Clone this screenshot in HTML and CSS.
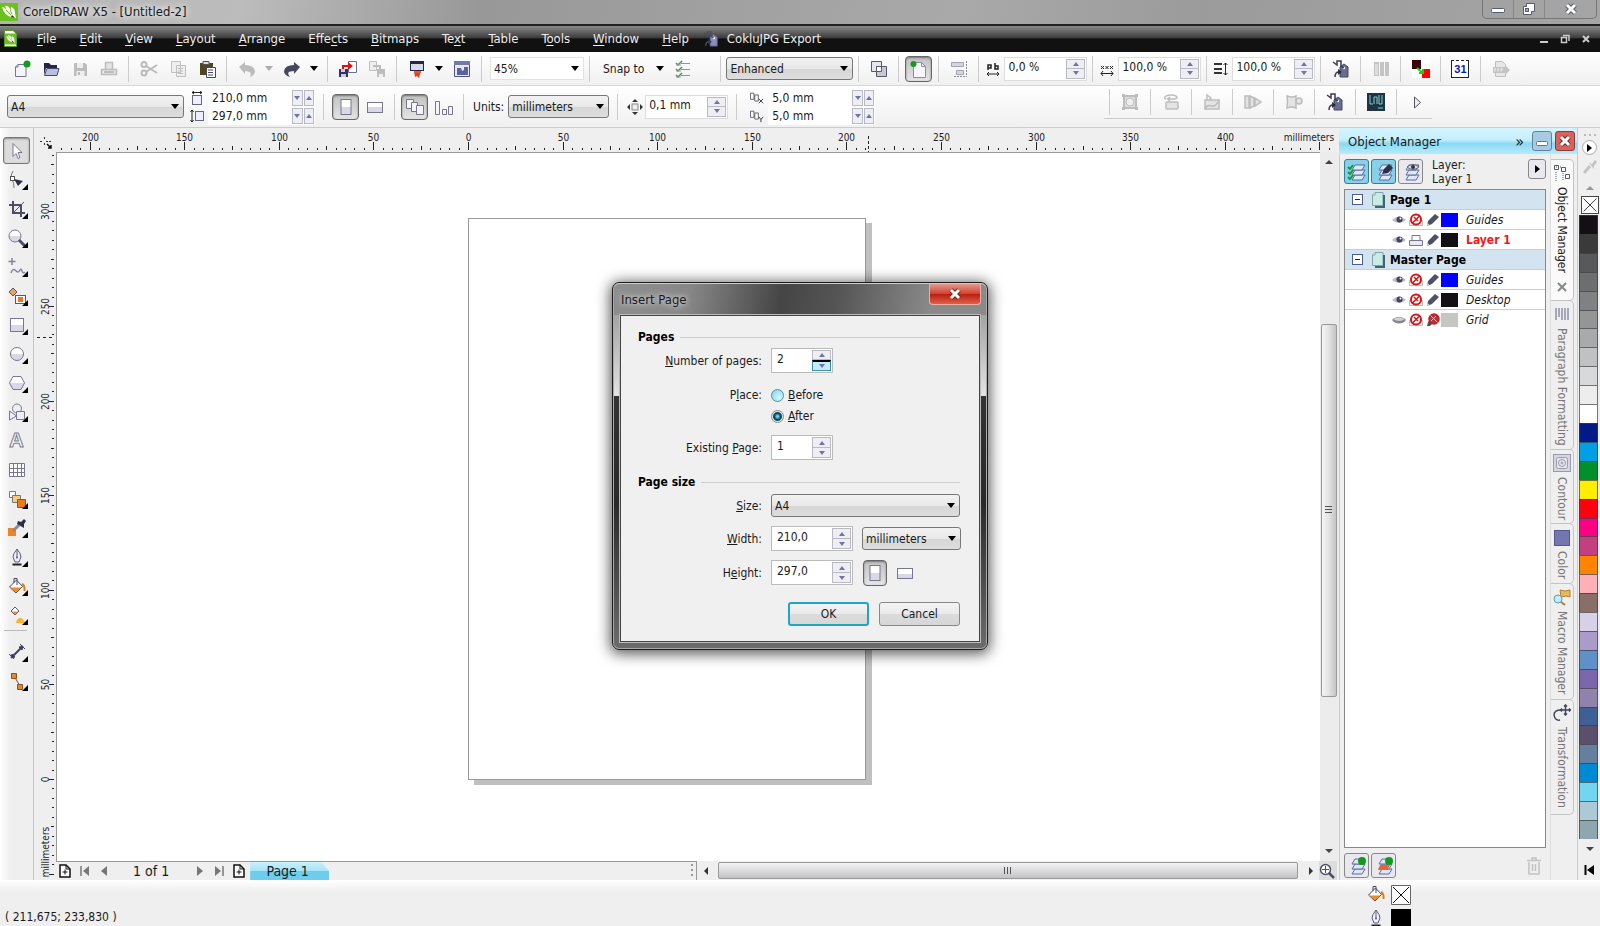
FILE: index.html
```html
<!DOCTYPE html>
<html lang="en">
<head>
  <meta charset="UTF-8">
  <meta name="viewport" content="width=device-width, initial-scale=1.0">
  <title>CorelDRAW X5 - [Untitled-2]</title>
  <link rel="stylesheet" href="styles.css">
</head>
<body>
  <!-- shared icons -->
  <svg class="defs" width="0" height="0">
    <linearGradient id="sheet" x1="0" y1="0" x2="0" y2="1">
      <stop offset="0.5" stop-color="#fff"/><stop offset="0.5" stop-color="#d8d8e6"/>
    </linearGradient>
    <symbol id="portrait" viewBox="0 0 18 18"><rect x="4" y="1.5" width="10" height="15" fill="url(#sheet)" stroke="#77778c"/></symbol>
    <symbol id="landscape" viewBox="0 0 18 18"><rect x="1.5" y="4.5" width="15" height="10" fill="url(#sheet)" stroke="#77778c"/></symbol>
    <symbol id="bucket" viewBox="0 0 18 18">
      <path d="M1.500 10 8.500 3l6 6.500-6.500 6.500z" fill="#fff" stroke="#44465c"/>
      <path d="M2.500 10.500h11L8 15.500z" fill="#f58a1f"/>
      <path d="M14 7q3 1 2.500 7" fill="none" stroke="#e07b1a" stroke-width="2"/>
      <path d="M6 6V1.500h3V8" fill="none" stroke="#44465c"/>
    </symbol>
    <symbol id="nib" viewBox="0 0 18 18">
      <path d="M9 1Q5 6 5 9l2 5h4l2-5Q13 6 9 1z" fill="#eef" stroke="#5a5c72"/>
      <path d="M9 2v7" stroke="#5a5c72"/><circle cx="9" cy="9.500" r="1" fill="#5a5c72"/>
      <path d="M4.500 16.500h9" stroke="#222" stroke-width="2"/>
    </symbol>
    <symbol id="tag" viewBox="0 0 18 18">
      <path d="M8 7l4-3 4 3v10H8z" fill="#6a6d90" stroke="#45476a"/><circle cx="12" cy="8" r="1.200" fill="#fff"/>
      <path d="M1 2l4 3V1h4v5l3 2M3 17q0-5 4-5" fill="none" stroke="#3a3b4d" stroke-width="1.500"/>
      <path d="M6 9l4 3-4 3z" fill="#2c2d3d"/>
    </symbol>
    <symbol id="eye" viewBox="0 0 14 14"><path d="M0 7q7-7 14 0-7 6-14 0z" fill="#b9b9c4"/><circle cx="7.500" cy="6.500" r="3" fill="#44455c"/><circle cx="8.500" cy="5.500" r="1" fill="#fff"/></symbol>
    <symbol id="eye-off" viewBox="0 0 14 14"><path d="M0.500 6q6.500-4 13 0v2q-6.500 5-13 0z" fill="#85858f"/><path d="M1 6q6-3 12 0-6 4-12 0z" fill="#d0d0d6"/></symbol>
    <symbol id="print" viewBox="0 0 14 14"><path d="M3 2.500h8v5H3z" fill="#fff" stroke="#77778c"/><path d="M0.500 7.500h13v5H.500z" fill="#e8e8ee" stroke="#77778c"/></symbol>
    <symbol id="no-print" viewBox="0 0 14 14"><path d="M0.500 7.500h13v5H.500z" fill="#eee" stroke="#bbb"/><circle cx="7" cy="6.500" r="5" fill="#fff" stroke="#d01818" stroke-width="2"/><path d="M10.500 3l-7 7M5 4l4 4" stroke="#d01818" stroke-width="1.500"/></symbol>
    <symbol id="pencil" viewBox="0 0 14 14"><path d="M1 13l1-5 7-7 4 3-7 7z" fill="#4d506b"/><path d="M1 13l.500-3 2 2z" fill="#ddd"/></symbol>
    <symbol id="no-pencil" viewBox="0 0 14 14"><path d="M1 13l1-4 5-5 3 3-6 6z" fill="#4d506b"/><circle cx="8" cy="6" r="5" fill="#a33a45" stroke="#d01818" stroke-width="1.500"/><path d="M4.500 2.500l7 7M5 8l5-5" stroke="#f3c0c0"/></symbol>
    <symbol id="sheets" viewBox="0 0 20 20">
      <g fill="#dfe6f5" stroke="#5b6c9c"><path d="M8 13h10l-3 5H5z"/><path d="M8 8h10l-3 5H5z"/><path d="M8 3h10l-3 5H5z"/></g>
    </symbol>
    <symbol id="doc" viewBox="0 0 16 16"><path d="M5 .500h8v13H2.500V3z" fill="#c9ebe6" stroke="#7fa5a8"/><path d="M14 3v12H5" fill="none" stroke="#3e6672" stroke-width="2"/><path d="M2.500 3H5V.500" fill="#fff" stroke="#7fa5a8"/></symbol>
    <symbol id="logo" viewBox="0 0 18 18"><rect width="18" height="18" fill="#6cbf1f"/><path d="M2 4q3 0 5 4L5 3q4-1 6 5l0-4q4 1 4 6l1 5-5-1Q4 12 2 4z" fill="#fff"/><path d="M6 7l5 5M10 7l2 4" stroke="#6cbf1f" fill="none"/><path d="M12 12l3 3-4-1z" fill="#143300"/></symbol>
    <symbol id="add-page" viewBox="0 0 12 14"><path d="M1 1h6l4 4v8H1z" fill="#fff" stroke="#111" stroke-width="1.500"/><path d="M7 1v4h4M6 5.500v5M3.500 8h5" fill="none" stroke="#111"/></symbol>
  </svg>

  <header class="titlebar">
    <svg class="app-icon"><use href="#logo"/></svg>
    <h1>CorelDRAW X5 - [Untitled-2]</h1>
    <div class="window-buttons">
      <button aria-label="Minimize"><svg width="16" height="14"><rect x="1.500" y="6.500" width="13" height="4" rx="1" fill="#fff" stroke="#555b70"/></svg></button>
      <button aria-label="Restore"><svg width="16" height="14"><path d="M5.500 1.500h8v8h-3v3h-8v-8h3z" fill="#fff" stroke="#555b70"/><rect x="4.500" y="6.500" width="3" height="3" fill="#aaa" stroke="#555b70"/></svg></button>
      <button class="wide" aria-label="Close"><svg width="16" height="14"><path d="M4 3l8 8M12 3l-8 8" stroke="#555b70" stroke-width="5"/><path d="M4 3l8 8M12 3l-8 8" stroke="#fff" stroke-width="3"/></svg></button>
    </div>
  </header>

  <nav class="menubar">
    <svg class="doc-icon" viewBox="0 0 13 17"><path d="M.500 .500h8.500l3.500 3.500v12.500H.500z" fill="#fff" stroke="#5a9a28"/><use href="#logo" x="1" y="3" width="11" height="12"/></svg>
    <button><u>F</u>ile</button>
    <button><u>E</u>dit</button>
    <button><u>V</u>iew</button>
    <button><u>L</u>ayout</button>
    <button><u>A</u>rrange</button>
    <button>Effe<u>c</u>ts</button>
    <button><u>B</u>itmaps</button>
    <button>Te<u>x</u>t</button>
    <button><u>T</u>able</button>
    <button>T<u>o</u>ols</button>
    <button><u>W</u>indow</button>
    <button class="help"><u>H</u>elp</button>
    <svg class="menu-tag"><use href="#tag"/></svg>
    <button class="plugin">CokluJPG Export</button>
    <div class="doc-buttons">
      <button aria-label="Minimize document"><svg width="10" height="10"><path d="M1 8h8" stroke="#ccc" stroke-width="2"/></svg></button>
      <button aria-label="Restore document"><svg width="10" height="10"><path d="M3 1.500h6V7M1.500 3.500h5v5h-5z" fill="none" stroke="#ccc" stroke-width="1.500"/></svg></button>
      <button aria-label="Close document"><svg width="10" height="10"><path d="M2 2l6 6M8 2L2 8" stroke="#ccc" stroke-width="2"/></svg></button>
    </div>
  </nav>

  <div class="toolbar standard">
    <button class="tool" aria-label="New"><svg viewBox="0 0 18 18"><path d="M5 4.500h8v12H2.500V7z" fill="#f4f4fb" stroke="#77778c"/><path d="M2.500 7H5V4.500" fill="none" stroke="#77778c"/><circle cx="14" cy="4" r="3.500" fill="#139a1c"/></svg></button>
    <button class="tool" aria-label="Open"><svg viewBox="0 0 18 18"><path d="M2 3h5l2 2h6v3H4l-2 7z" fill="#23264a"/><path d="M2.500 15.500 5 8.500h12l-2 7z" fill="#b9bfdd" stroke="#45486b"/></svg></button>
    <button class="tool" aria-label="Save"><svg viewBox="0 0 18 18"><path d="M3 3h11l2 2v11H3z" fill="#bdbdbd"/><path d="M6 3h6v5H6zM5.500 11h8v5h-8z" fill="#eee"/><path d="M7 12h2v3H7z" fill="#bbb"/></svg></button>
    <button class="tool" aria-label="Print"><svg viewBox="0 0 18 18"><path d="M5.500 2.500h7v7h-7zM1.500 9.500h15v5h-15z" fill="#e4e4e4" stroke="#bdbdbd" stroke-width="1.500"/><path d="M4 12h10" stroke="#bdbdbd" stroke-width="2"/></svg></button>
    <span class="sep"></span>
    <button class="tool" aria-label="Cut"><svg viewBox="0 0 18 18" fill="none" stroke="#bbb" stroke-width="2"><circle cx="4" cy="4.500" r="2.500"/><circle cx="4" cy="13" r="2.500"/><path d="M6 6l11 7M6 12l11-7"/></svg></button>
    <button class="tool" aria-label="Copy"><svg viewBox="0 0 18 18" fill="#eee" stroke="#c0c0c0"><path d="M2.500 1.500h9v11h-9zM7.500 5.500h9v11h-9zM9 8.500h5M9 11h5M9 13.500h5"/></svg></button>
    <button class="tool" aria-label="Paste"><svg viewBox="0 0 18 18"><path d="M2 3h13v12H2z" fill="#51471f"/><path d="M5 1.500h6v3H5z" fill="#ddd" stroke="#555"/><path d="M8.500 7.500h9v10h-9z" fill="#fff" stroke="#45486b"/><path d="M10 10h5M10 12.500h5M10 15h5" stroke="#45486b"/></svg></button>
    <span class="sep"></span>
    <button class="tool" aria-label="Undo"><svg viewBox="0 0 18 18"><path d="M1 7l6-5v3q9 0 10 6 0 4-5 6 3-6-5-6v3z" fill="#bcbcbc"/></svg></button>
    <button class="caret off" aria-label="Undo list"></button>
    <button class="tool" aria-label="Redo"><svg viewBox="0 0 18 18"><path d="M17 7l-6-5v3Q2 5 1 11q0 4 6 6-5-6 4-6v3z" fill="#45475c"/></svg></button>
    <button class="caret" aria-label="Redo list"></button>
    <span class="sep"></span>
    <button class="tool" aria-label="Import"><svg viewBox="0 0 18 18"><path d="M9.500 1.500h8v11h-8z" fill="#fff" stroke="#6b6e90"/><path d="M0 9h9v8H0z" fill="#2f3263"/><path d="M2 9h4v3H2zM2 14h5v3H2z" fill="#ccd"/><path d="M4 9V6h6" fill="none" stroke="#e01010" stroke-width="2"/><path d="M9 2l5 4-5 4z" fill="#e01010"/></svg></button>
    <button class="tool" aria-label="Export"><svg viewBox="0 0 18 18"><path d="M1.500 1.500h7v9h-7z" fill="#eee" stroke="#c0c0c0"/><path d="M9 9h8v8H9z" fill="#bdbdbd"/><path d="M11 14h4v3h-4z" fill="#eee"/><path d="M5 6h7v3" fill="none" stroke="#bbb" stroke-width="2"/></svg></button>
    <span class="sep"></span>
    <button class="tool" aria-label="Application launcher"><svg viewBox="0 0 18 18"><path d="M2 1h14v10H2z" fill="#22254c"/><path d="M3 4h12v6H3z" fill="#d5d9ea"/><path d="M6 11h7l-1 3-1 4-2-2-2 1z" fill="#ef3a1a"/><path d="M6 11h7v2H6z" fill="#ff5020"/></svg></button>
    <button class="caret" aria-label="Launcher list"></button>
    <button class="tool" aria-label="Welcome screen"><svg viewBox="0 0 18 18"><path d="M1.500 1.500h15v15h-15z" fill="#e6e8f5" stroke="#50547e"/><path d="M1 1h16v4H1z" fill="#737ba5"/><path d="M4 8h4l1 3 2-1V7h4v8H4z" fill="#5a62a0"/></svg></button>
    <span class="sep"></span>
    <span class="select plain zoom"><select aria-label="Zoom level"><option>45%</option></select></span>
    <span class="sep"></span>
    <button class="snap">Snap to</button>
    <button class="caret" aria-label="Snap list"></button>
    <button class="tool" aria-label="Options"><svg viewBox="0 0 18 18" fill="none"><path d="M7 3.500h9M7 9.500h9M7 15.500h9" stroke="#8a9a90"/><path d="M2 3l2 2 4-4M2 9l2 2 4-4M2 15l2 2 4-4" stroke="#3f9a4c" stroke-width="1.500"/><path d="M2 5h5M2 11h5M2 17h5" stroke="#99a"/></svg></button>
    <span class="sep gap"></span>
    <span class="select view"><select aria-label="View quality"><option>Enhanced</option></select></span>
    <span class="sep"></span>
    <button class="tool" aria-label="Overlap"><svg viewBox="0 0 18 18"><path d="M1.500 1.500h10v10h-10z" fill="#e6e6ee" stroke="#55586f"/><path d="M6.500 6.500h10v10h-10z" fill="#c9c9d6" stroke="#55586f"/><path d="M6.500 6.500h5v5h-5z" fill="#fff" stroke="#55586f"/></svg></button>
    <span class="sep"></span>
    <button class="tool on" aria-label="New page frame"><svg viewBox="0 0 18 18"><path d="M3.500 2.500h8l4 4v11h-12z" fill="#f8f8fc" stroke="#8a8ca0"/><path d="M11.500 2.500v4h4" fill="none" stroke="#8a8ca0"/><circle cx="3.500" cy="4" r="3" fill="#139a1c"/></svg></button>
    <span class="sep"></span>
    <button class="tool" aria-label="Align"><svg viewBox="0 0 18 18"><path d="M1.500 2.500h12v4h-12zM6.500 10.500h7v4h-7z" fill="#d5d5de" stroke="#a2a3b2"/><path d="M16.500 1v16M4 16.500h12" stroke="#88899c" stroke-dasharray="2 1"/></svg></button>
    <span class="sep"></span>
    <label class="field-icon" for="kern"><svg viewBox="0 0 14 14"><path d="M1 12h12M3 10l-2 2 2 2M11 10l2 2-2 2" fill="none" stroke="#222"/><path d="M2 8V3h3v3H2M9 1v6h3V4H9" fill="none" stroke="#222" stroke-width="1.500"/></svg></label>
    <span class="spin"><input id="kern" value="0,0 %"><span class="arrows"><button aria-label="Up"></button><button aria-label="Down"></button></span></span>
    <span class="sep"></span>
    <label class="field-icon" for="word"><svg viewBox="0 0 14 14"><path d="M1 11.500h12M3 9l-2 2.500L3 14M11 9l2 2.500-2 2.500" fill="none" stroke="#222"/><path d="M1 4l3 3M4 4L1 7M5.500 4l3 3M8.500 4l-3 3M10 4l3 3M13 4l-3 3" stroke="#222"/></svg></label>
    <span class="spin"><input id="word" value="100,0 %"><span class="arrows"><button aria-label="Up"></button><button aria-label="Down"></button></span></span>
    <span class="sep"></span>
    <label class="field-icon" for="lead"><svg viewBox="0 0 14 14"><path d="M0 2h8M0 7h8M0 11h8" stroke="#333" stroke-width="2"/><path d="M11.500 1v12M9.500 3l2-2 2 2M9.500 11l2 2 2-2" fill="none" stroke="#222"/></svg></label>
    <span class="spin"><input id="lead" value="100,0 %"><span class="arrows"><button aria-label="Up"></button><button aria-label="Down"></button></span></span>
    <span class="sep"></span>
    <button class="tool" aria-label="Tag export"><svg viewBox="0 0 18 18"><use href="#tag"/></svg></button>
    <span class="sep"></span>
    <button class="tool" aria-label="Columns"><svg viewBox="0 0 18 18"><path d="M2 2h5v14H2zM8 2h4v14H8zM13 2h4v14h-4z" fill="#c4c4c4"/><path d="M3 4h3v11H3z" fill="#ddd"/></svg></button>
    <span class="sep"></span>
    <button class="tool" aria-label="Color replace"><svg viewBox="0 0 18 18"><path d="M0 0h18v18H0z" fill="#fff"/><path d="M0 0h9v9H0z" fill="#3a0008"/><path d="M10 9h8v9h-8z" fill="#f00"/><path d="M5 8l6 5M11 9v4H7" fill="none" stroke="#1bd01b" stroke-width="2"/></svg></button>
    <span class="sep"></span>
    <button class="tool calendar" aria-label="Calendar">31</button>
    <span class="sep"></span>
    <button class="tool" aria-label="Publish to PDF"><svg viewBox="0 0 18 18"><path d="M3.500 1.500h7l3 3v12h-10z" fill="#e6e6e6" stroke="#c0c0c0"/><path d="M1 7h12V5l5 5-5 5v-2H1z" fill="#c4c4c4"/><path d="M3 8.500v3M6 8.500v3M9 8.500v3M3 9h1M6 9h1M9 9h2" stroke="#eee"/></svg></button>
  </div>

  <div class="toolbar property">
    <span class="select paper"><select aria-label="Paper type"><option>A4</option></select></span>
    <div class="pair">
      <label for="pw"><svg viewBox="0 0 14 14"><rect x="2.500" y="4.500" width="9" height="9" fill="#eef" stroke="#667"/><path d="M2 1.500h10M4 0L2 1.500 4 3M10 0l2 1.500L10 3" fill="none" stroke="#222"/></svg></label><input id="pw" value="210,0 mm"><span class="mini"><button aria-label="Down"></button><button aria-label="Up"></button></span>
      <label for="ph"><svg viewBox="0 0 14 14"><rect x="5.500" y="2.500" width="8" height="9" fill="#eef" stroke="#667"/><path d="M2 1v12M.500 3L2 1l1.500 2M.500 11L2 13l1.500-2" fill="none" stroke="#222"/></svg></label><input id="ph" value="297,0 mm"><span class="mini"><button aria-label="Down"></button><button aria-label="Up"></button></span>
    </div>
    <span class="sep wide"></span>
    <button class="tool on" aria-label="Portrait"><svg><use href="#portrait"/></svg></button>
    <button class="tool" aria-label="Landscape"><svg><use href="#landscape"/></svg></button>
    <span class="sep"></span>
    <button class="tool on" aria-label="All pages"><svg viewBox="0 0 18 18" fill="#f4f4fb" stroke="#77778c"><path d="M.500 1.500h7v9h-7z"/><path d="M5.500 4.500h6v9h-6z"/><path d="M10.500 7.500h7v9h-7z"/></svg></button>
    <button class="tool" aria-label="Current page"><svg viewBox="0 0 18 18" fill="#f4f4fb" stroke="#77778c"><path d="M.500 3.500h4v13h-4zM7.500 11.500h4v5h-4zM13.500 8.500h4v8h-4z"/></svg></button>
    <span class="sep"></span>
    <label class="units" for="units">Units:</label>
    <span class="select unit"><select id="units"><option>millimeters</option></select></span>
    <span class="sep wide"></span>
    <label class="nudge" for="nudge"><svg viewBox="0 0 16 16"><path d="M8 0l3 3H5zM8 16l3-3H5zM0 8l3-3v6zM16 8l-3-3v6z" fill="#333"/><rect x="5" y="5" width="6" height="6" fill="#eee" stroke="#888"/></svg></label>
    <span class="spin"><input id="nudge" value="0,1 mm"><span class="arrows"><button aria-label="Up"></button><button aria-label="Down"></button></span></span>
    <span class="sep wide"></span>
    <div class="pair dup">
      <label for="dx"><svg viewBox="0 0 16 14"><path d="M.500 1.500h4v7h-4zM5.500 3.500h4v7h-4z" fill="#fff" stroke="#556"/><path d="M10 8l5 5M15 8l-5 5" stroke="#222"/></svg></label><input id="dx" value="5,0 mm"><span class="mini"><button aria-label="Down"></button><button aria-label="Up"></button></span>
      <label for="dy"><svg viewBox="0 0 16 14"><path d="M.500 1.500h4v7h-4zM5.500 3.500h4v7h-4z" fill="#fff" stroke="#556"/><path d="M10 8l2.500 3L15 8M12.500 11v3" fill="none" stroke="#222"/></svg></label><input id="dy" value="5,0 mm"><span class="mini"><button aria-label="Down"></button><button aria-label="Up"></button></span>
    </div>
    <div class="floating">
      <span class="sep"></span>
      <button class="tool" aria-label="Frame"><svg viewBox="0 0 18 18"><rect x="3" y="3" width="12" height="12" fill="#ddd" stroke="#bdbdbd" stroke-width="2"/><circle cx="9" cy="9" r="4" fill="#eee" stroke="#bdbdbd"/><path d="M1 1h3v3H1zM14 1h3v3h-3zM1 14h3v3H1zM14 14h3v3h-3z" fill="#bdbdbd"/></svg></button>
      <span class="sep"></span>
      <button class="tool" aria-label="Rotate"><svg viewBox="0 0 18 18" fill="none" stroke="#bdbdbd" stroke-width="1.500"><rect x="4" y="9" width="12" height="7" rx="1" fill="#e4e4e4"/><path d="M4 6q-3-1 0-3 5-2 10 0 3 2-2 3H6M8 4L5.500 6 8 8"/></svg></button>
      <span class="sep"></span>
      <button class="tool" aria-label="Envelope"><svg viewBox="0 0 18 18" fill="#e4e4e4" stroke="#bdbdbd" stroke-width="1.500"><path d="M2 7h14v9H2z"/><path d="M2 16q2-5 7-3 4 1 7-6M4 7V2l4 3-2 2" fill="none"/></svg></button>
      <span class="sep"></span>
      <button class="tool" aria-label="Mirror"><svg viewBox="0 0 18 18" fill="#e4e4e4" stroke="#bdbdbd" stroke-width="1.500"><path d="M1 3h4v12H1zM6 3l4 2v8l-4 2zM11 5l6 4-6 4z"/></svg></button>
      <span class="sep"></span>
      <button class="tool" aria-label="Shape"><svg viewBox="0 0 18 18" fill="#e4e4e4" stroke="#bdbdbd" stroke-width="1.500"><path d="M2 3q5 2 9 0v12q-5-2-9 0 1-6 0-12z"/><circle cx="14" cy="8" r="3"/></svg></button>
      <span class="sep"></span>
      <button class="tool" aria-label="Tag"><svg viewBox="0 0 18 18"><use href="#tag"/></svg></button>
      <span class="sep"></span>
      <button class="tool" aria-label="Macro"><svg viewBox="0 0 18 18"><path d="M0 0h18v18H0z" fill="#1e3442"/><path d="M3 2v9h3M7 11V4h3v7M12 2v9h3V2M11 15h5" fill="none" stroke="#7fd0d8"/></svg></button>
      <span class="sep"></span>
      <button class="tool" aria-label="Run"><svg viewBox="0 0 18 18"><path d="M6.500 4v11l6-5.500z" fill="#eee" stroke="#556"/></svg></button>
    </div>
  </div>

  <main class="main">
    <aside class="toolbox">
      <button class="on" aria-label="Pick"><svg viewBox="0 0 18 18"><path d="M5 1.500v13l3-3 2 5 2-1-2-5h4z" fill="#fff" stroke="#77788f"/></svg></button>
      <button class="more" aria-label="Shape"><svg viewBox="0 0 18 18"><path d="M5 0q-3 4-1 8t2 9" fill="none" stroke="#77788f"/><rect x="2.500" y="5.500" width="4" height="4" fill="#fff" stroke="#555"/><path d="M6 8l9 2-5 5z" fill="#2c2e44"/></svg></button>
      <button class="more" aria-label="Crop"><svg viewBox="0 0 18 18"><path d="M5 1v12h12M1 5h12v12" fill="none" stroke="#4d4f68" stroke-width="2"/><path d="M6 12L16 2" stroke="#4d4f68"/></svg></button>
      <button class="more" aria-label="Zoom"><svg viewBox="0 0 18 18"><circle cx="7" cy="7" r="6" fill="url(#sheet)" stroke="#77788f"/><path d="M11 11l6 6" stroke="#4d4f68" stroke-width="3"/></svg></button>
      <button class="more" aria-label="Freehand"><svg viewBox="0 0 18 18"><path d="M4 0v7M.500 3.500h7M3 15q2-5 4-3t3 2 2-2 2 1 3 1" fill="none" stroke="#85869a" stroke-width="1.500"/></svg></button>
      <button class="more" aria-label="Smart fill"><svg viewBox="0 0 18 18"><path d="M1 5l4-4 4 4-4 4z" fill="#f0a254" stroke="#555870"/><rect x="7.500" y="8.500" width="10" height="8" fill="#fff" stroke="#555870"/><path d="M10 10h5v5h-5z" fill="#ec7522"/></svg></button>
      <button class="more" aria-label="Rectangle"><svg viewBox="0 0 18 18"><rect x="2.500" y="2.500" width="13" height="13" fill="url(#sheet)" stroke="#77788f"/></svg></button>
      <button class="more" aria-label="Ellipse"><svg viewBox="0 0 18 18"><circle cx="9" cy="9" r="6.500" fill="url(#sheet)" stroke="#77788f"/></svg></button>
      <button class="more" aria-label="Polygon"><svg viewBox="0 0 18 18"><path d="M5 2.500h8L16.500 9 13 15.500H5L1.500 9z" fill="url(#sheet)" stroke="#77788f"/></svg></button>
      <button class="more" aria-label="Basic shapes"><svg viewBox="0 0 18 18" fill="#eeeef5" stroke="#77788f"><path d="M1.500 8v9l7-4z"/><circle cx="9" cy="5.500" r="4.500"/><path d="M8.500 8.500h8v8h-8z"/></svg></button>
      <button class="letter" aria-label="Text">A</button>
      <button aria-label="Table"><svg viewBox="0 0 18 18" fill="#fff" stroke="#77788f"><path d="M1.500 2.500h15v13h-15zM5.500 2.500v13M9.500 2.500v13M13.500 2.500v13M1.500 7.500h15M1.500 11.500h15"/></svg></button>
      <button class="more" aria-label="Blend"><svg viewBox="0 0 18 18"><path d="M1.500 1.500h6v6h-6z" fill="#fff" stroke="#77788f"/><path d="M4.500 5.500h8v7h-8z" fill="#f7cf78" stroke="#777"/><path d="M9.500 9.500h8v8h-8z" fill="#f1791c" stroke="#a05010"/></svg></button>
      <button class="more" aria-label="Eyedropper"><svg viewBox="0 0 18 18"><path d="M0 9h8v8H0z" fill="#f58220"/><path d="M5 12l6-6" stroke="#88899b" stroke-width="3"/><path d="M10 2l3 1 3-3 2 2-2 3v4l-7-4z" fill="#2c2e44"/></svg></button>
      <button class="more" aria-label="Outline pen"><svg><use href="#nib"/></svg></button>
      <button class="more" aria-label="Fill"><svg><use href="#bucket"/></svg></button>
      <button class="more" aria-label="Interactive fill"><svg viewBox="0 0 18 18"><path d="M3 5l4-4 4 4-4 4z" fill="#fff" stroke="#555870"/><path d="M4 5.500h6L7 8.500z" fill="#f08a34"/><path d="M8 17q1-5 4-5 3 0 5 5z" fill="#f9b233"/></svg></button>
      <hr>
      <button class="more" aria-label="Dimension"><svg viewBox="0 0 18 18"><path d="M4 14L14 4" stroke="#3f4158" stroke-width="2"/><path d="M1 11l5 5M12 1l5 5M3 15l1-4 3 3zM15 3l-4 1 3 3z" fill="#3f4158" stroke="#3f4158"/></svg></button>
      <button class="more" aria-label="Connector"><svg viewBox="0 0 18 18"><path d="M6 4l6 10" stroke="#555"/><path d="M3.500 1.500h5v5h-5zM9.500 12.500h5v5h-5z" fill="#e8862e" stroke="#8a5020"/></svg></button>
    </aside>

    <section class="work">
      <div class="ruler-corner"><svg width="14" height="14"><path d="M4.500 0v3M4.500 6v3M0 4.500h3M6 4.500h5" stroke="#333" stroke-dasharray="2 1"/><path d="M7 7l4 4M11 8v3H8" fill="none" stroke="#111" stroke-width="1.500"/></svg></div>
      <svg id="ruler-h" class="ruler-h"></svg>
      <svg id="ruler-v" class="ruler-v"></svg>
      <div class="canvas">
        <div class="page"></div>
      </div>
      <div class="scroll-v">
        <button class="up" aria-label="Scroll up"></button>
        <div class="thumb"><span></span></div>
        <button class="down" aria-label="Scroll down"></button>
      </div>
      <div class="bottom">
        <div class="pager">
          <button aria-label="Add page before"><svg width="12" height="14"><use href="#add-page"/></svg></button>
          <button aria-label="First page"><svg width="10" height="12"><path d="M1 1v10" stroke="#777" stroke-width="1.500"/><path d="M9 1v10L3 6z" fill="#777"/></svg></button>
          <button aria-label="Previous page"><svg width="10" height="12"><path d="M8 1v10L2 6z" fill="#777"/></svg></button>
          <output>1 of 1</output>
          <button aria-label="Next page"><svg width="10" height="12"><path d="M2 1v10l6-5z" fill="#777"/></svg></button>
          <button aria-label="Last page"><svg width="10" height="12"><path d="M9 1v10" stroke="#777" stroke-width="1.500"/><path d="M1 1v10l6-5z" fill="#777"/></svg></button>
          <button aria-label="Add page after"><svg width="12" height="14"><use href="#add-page"/></svg></button>
          <button class="page-tab">Page 1</button>
          <span class="grip"></span>
        </div>
        <div class="scroll-h">
          <button class="left" aria-label="Scroll left"></button>
          <div class="thumb"><span></span></div>
          <button class="right" aria-label="Scroll right"></button>
        </div>
        <button class="navigator" aria-label="Navigator"><svg width="16" height="16"><circle cx="6.500" cy="6.500" r="5" fill="#fff" stroke="#4d4f68" stroke-width="1.500"/><path d="M6.500 3v7M3 6.500h7" stroke="#4d4f68"/><path d="M10 10l5 5" stroke="#4d4f68" stroke-width="2.500"/></svg></button>
      </div>
    </section>

    <aside class="docker">
      <header class="docker-head">
        <h2>Object Manager</h2>
        <span class="chevrons">»</span>
        <button class="min" aria-label="Roll up"><svg width="16" height="16"><rect x="2.500" y="8.500" width="11" height="4" rx="1" fill="#fff" stroke="#66718a"/></svg></button>
        <button class="shut" aria-label="Close docker"><svg width="16" height="16"><path d="M4 4l8 8M12 4l-8 8" stroke="#6d3030" stroke-width="5"/><path d="M4 4l8 8M12 4l-8 8" stroke="#fff" stroke-width="3"/></svg></button>
      </header>
      <div class="docker-body">
        <div class="panel">
          <div class="layer-bar">
            <button class="on" aria-label="Show object properties"><svg width="20" height="20"><use href="#sheets"/><path d="M1 5l2 2 3-4M1 10l2 2 3-4M1 15l2 2 3-4" fill="none" stroke="#169a3a" stroke-width="2"/></svg></button>
            <button class="on" aria-label="Edit across layers"><svg width="20" height="20"><use href="#sheets"/><path d="M8 12l2-5 5-5 4 4-5 5z" fill="#2c3048"/></svg></button>
            <button aria-label="Layer manager view"><svg width="20" height="20"><use href="#sheets"/><path d="M6 5q6-5 12 0-6 5-12 0z" fill="#ddd" stroke="#667"/><circle cx="12" cy="5" r="2" fill="#333"/></svg></button>
            <p>Layer:<br>Layer 1</p>
            <button class="flyout" aria-label="Object manager options"></button>
          </div>
          <ul class="tree">
            <li class="group"><button class="fold" aria-label="Collapse"></button><svg width="16" height="16"><use href="#doc"/></svg>Page 1</li>
            <li><svg><use href="#eye"/></svg><svg><use href="#no-print"/></svg><svg><use href="#pencil"/></svg><i class="swatch blue"></i><em>Guides</em></li>
            <li><svg><use href="#eye"/></svg><svg><use href="#print"/></svg><svg><use href="#pencil"/></svg><i class="swatch black"></i><b>Layer 1</b></li>
            <li class="group"><button class="fold" aria-label="Collapse"></button><svg width="16" height="16"><use href="#doc"/></svg>Master Page</li>
            <li><svg><use href="#eye"/></svg><svg><use href="#no-print"/></svg><svg><use href="#pencil"/></svg><i class="swatch blue"></i><em>Guides</em></li>
            <li><svg><use href="#eye"/></svg><svg><use href="#no-print"/></svg><svg><use href="#pencil"/></svg><i class="swatch black"></i><em>Desktop</em></li>
            <li><svg><use href="#eye-off"/></svg><svg><use href="#no-print"/></svg><svg><use href="#no-pencil"/></svg><i class="swatch gray"></i><em>Grid</em></li>
          </ul>
          <div class="panel-foot">
            <button aria-label="New layer"><svg width="20" height="20"><use href="#sheets"/><circle cx="15" cy="5" r="4" fill="#129a1c"/></svg></button>
            <button aria-label="New master layer"><svg width="20" height="20"><use href="#sheets"/><path d="M6 9h10l-3 5H4z" fill="#f0622a"/><circle cx="15" cy="5" r="4" fill="#129a1c"/></svg></button>
            <button class="trash" aria-label="Delete"><svg width="16" height="18" fill="none" stroke="#c2c2c2" stroke-width="1.500"><path d="M1 3.500h14M6 3V1h4v2M3 5v12h10V5M6.500 7v7M9.500 7v7"/></svg></button>
          </div>
        </div>
        <nav class="tabs">
          <button class="active"><svg width="18" height="18" fill="none" stroke="#55586f"><path d="M1.500 1.500h4v4h-4zM8.500 3.500h4v4h-4zM12.500 10.500h4v4h-4z"/><path d="M3 8v9M3 3h6M10 9v8" stroke-dasharray="1 1"/></svg>Object Manager<svg class="x" width="12" height="12"><path d="M2 2l8 8M10 2l-8 8" stroke="#888" stroke-width="2"/></svg></button>
          <button class="paragraph"><svg width="16" height="16"><path d="M2 1v12M5 1v9M8 1v12M11 1v12M14 1v12" stroke="#a5a6b8" stroke-width="2"/></svg>Paragraph Formatting</button>
          <button class="contour"><svg width="18" height="18" fill="none" stroke="#9a9ba8"><rect x=".500" y=".500" width="17" height="17" fill="#d5d6e0"/><rect x="3.500" y="3.500" width="11" height="11" rx="2" fill="#e6e6ee"/><circle cx="9" cy="9" r="3.500"/><circle cx="9" cy="9" r="1"/></svg>Contour</button>
          <button class="color"><svg width="16" height="16"><rect x=".500" y=".500" width="15" height="15" fill="#7476b0" stroke="#55578c"/></svg>Color</button>
          <button class="macro"><svg width="18" height="18"><path d="M7 2l5 1 5-1v7l-4-1-5 1z" fill="#e9b85a" stroke="#b08030"/><circle cx="5" cy="11" r="4" fill="#c6ecfa" stroke="#5a9cc0"/><path d="M8 14l4 3" stroke="#b08030" stroke-width="2"/></svg>Macro Manager</button>
          <button class="transform"><svg width="18" height="18" fill="none" stroke="#44465c" stroke-width="1.500"><path d="M8 6q-7 0-7 5 1 6 6 5"/><path d="M12.500 1v10M7.500 6h10M11 2.500L12.500 1 14 2.500M11 9.500l1.500 1.500L14 9.500M9 4.500L7.500 6 9 7.500M16 4.500L17.500 6 16 7.500"/></svg>Transformation</button>
        </nav>
      </div>
    </aside>

    <aside class="palette">
      <span class="dots"></span>
      <button class="play" aria-label="Palette options"></button>
      <svg class="dropper" viewBox="0 0 16 16"><path d="M2 14l6-7" stroke="#c4c4c4" stroke-width="3"/><path d="M7 4l3 1 3-4 2 2-3 4v3z" fill="#c4c4c4"/></svg>
      <button class="up" aria-label="Scroll palette up"></button>
      <button class="none" aria-label="No color"><svg viewBox="0 0 20 20"><path d="M2 2l16 16M18 2L2 18" stroke="#111"/></svg></button>
      <div id="swatches" class="swatches"></div>
      <button class="down" aria-label="Scroll palette down"></button>
      <button class="start" aria-label="Expand palette"><svg width="12" height="12"><path d="M1.500 1v10" stroke="#000" stroke-width="2"/><path d="M10 1v10L3 6z"/></svg></button>
    </aside>
  </main>

  <footer class="status">
    <output>( 211,675; 233,830 )</output>
    <div class="paint">
      <svg width="18" height="18"><use href="#bucket"/></svg>
      <svg class="no-fill" width="20" height="20"><path d="M.500.500h19v19H.500z" fill="#fff" stroke="#666"/><path d="M2 2l16 16M18 2L2 18" stroke="#111"/></svg>
      <svg width="18" height="18"><use href="#nib"/></svg>
      <span class="stroke-color"></span>
    </div>
  </footer>

  <div class="overlay">
    <form class="dialog">
      <header>
        <h2>Insert Page</h2>
        <button type="button" aria-label="Close"><svg width="16" height="14"><path d="M4 3l8 8M12 3l-8 8" stroke="#7c2018" stroke-width="5"/><path d="M4 3l8 8M12 3l-8 8" stroke="#fff" stroke-width="3"/></svg></button>
      </header>
      <div class="dialog-body">
        <h3>Pages</h3>
        <div class="row">
          <label for="count"><u>N</u>umber of pages:</label>
          <span class="spin short pressed"><input id="count" value="2"><span class="arrows"><button type="button" aria-label="Up"></button><button type="button" aria-label="Down"></button></span></span>
        </div>
        <div class="row place">
          <span class="caption">P<u>l</u>ace:</span>
          <div class="radios">
            <label><input type="radio" name="place" class="hot"><span><u>B</u>efore</span></label>
            <label><input type="radio" name="place" checked><span><u>A</u>fter</span></label>
          </div>
        </div>
        <div class="row">
          <label for="existing">Existing <u>P</u>age:</label>
          <span class="spin short"><input id="existing" value="1"><span class="arrows"><button type="button" aria-label="Up"></button><button type="button" aria-label="Down"></button></span></span>
        </div>
        <h3 class="second">Page size</h3>
        <div class="row size">
          <label for="size"><u>S</u>ize:</label>
          <span class="select"><select id="size"><option>A4</option></select></span>
        </div>
        <div class="row">
          <label for="width"><u>W</u>idth:</label>
          <span class="spin"><input id="width" value="210,0"><span class="arrows"><button type="button" aria-label="Up"></button><button type="button" aria-label="Down"></button></span></span>
          <span class="select"><select aria-label="Page units"><option>millimeters</option></select></span>
        </div>
        <div class="row">
          <label for="height">H<u>e</u>ight:</label>
          <span class="spin"><input id="height" value="297,0"><span class="arrows"><button type="button" aria-label="Up"></button><button type="button" aria-label="Down"></button></span></span>
          <button type="button" class="tool on" aria-label="Portrait"><svg><use href="#portrait"/></svg></button>
          <button type="button" class="tool" aria-label="Landscape"><svg><use href="#landscape"/></svg></button>
        </div>
        <div class="actions">
          <button type="submit" class="default">OK</button>
          <button type="button">Cancel</button>
        </div>
      </div>
    </form>
  </div>

  <script src="main.js"></script>
</body>
</html>
```
FILE: styles.css
```css
* {
  box-sizing: border-box;
}
body {
  margin: 0;
  height: 100vh;
  display: flex;
  flex-direction: column;
  overflow: hidden;
  font-family: "DejaVu Sans Condensed", "DejaVu Sans", sans-serif;
  font-size: 12px;
  color: #1a1a1a;
  background: #efefef;
}
button, input, select {
  font: inherit;
  color: inherit;
  margin: 0;
  padding: 0;
  border: 0;
  background: none;
}
h1, h2, h3, p, ul {
  margin: 0;
  padding: 0;
  font-weight: normal;
}
svg {
  display: block;
}
.defs {
  position: absolute;
}

/* title and menu */
.titlebar {
  height: 26px;
  display: flex;
  align-items: center;
  padding-bottom: 1px;
  border-bottom: 2px solid #222;
  background: linear-gradient(100deg, #b4b4b4 0, #bcbcbc 15%, #989898 30%, #a9a9a9 60%, #9b9b9b 75%, #a5a5a5);
}
.app-icon {
  width: 18px;
  height: 18px;
}
.titlebar h1 {
  margin-left: 5px;
  font-size: 13px;
  text-shadow: 0 0 6px #fff, 0 0 8px #fff;
}
.window-buttons {
  display: flex;
  align-self: flex-start;
  margin-left: auto;
  margin-right: 3px;
  border: 1px solid #777;
  border-top: 0;
  border-radius: 0 0 5px 5px;
}
.window-buttons button {
  width: 31px;
  height: 18px;
  display: grid;
  place-items: center;
  border-right: 1px solid #888;
}
.window-buttons .wide {
  width: 51px;
  border: 0;
}
.menubar {
  height: 26px;
  display: flex;
  align-items: center;
  padding-left: 4px;
  padding-bottom: 1px;
  font-size: 13px;
  color: #eee;
  background: linear-gradient(#8a8a8a, #3c3c3c 45%, #111 50%);
}
.menubar > button {
  margin-right: 23px;
}
.menubar u {
  text-underline-offset: 2px;
}
.doc-icon {
  width: 13px;
  height: 17px;
  margin-right: 20px;
}
.menubar > .help {
  margin-right: 14px;
}
.menu-tag {
  width: 16px;
  height: 18px;
  margin-right: 8px;
  filter: brightness(1.3);
}
.doc-buttons {
  display: flex;
  gap: 11px;
  margin-left: auto;
  margin-right: 9px;
}

/* toolbars */
.toolbar {
  display: flex;
  align-items: center;
  background: linear-gradient(#fff, #f0f0f0);
}
.standard {
  height: 34px;
  padding-left: 7px;
  border-bottom: 1px solid #d8d8d8;
}
.property {
  height: 42px;
  padding-left: 7px;
  border-bottom: 1px solid #ccc;
}
.tool {
  flex: none;
  width: 29px;
  height: 26px;
  display: grid;
  place-items: center;
}
.tool svg {
  width: 18px;
  height: 18px;
}
.tool.on {
  width: 27px;
  margin: 0 1px;
  border: 1px solid #666;
  border-radius: 4px;
  background: linear-gradient(#c2c2c2, #e4e4e4);
  box-shadow: inset 0 1px 2px #777;
}
.sep {
  flex: none;
  width: 11px;
  height: 26px;
  background: linear-gradient(#ccc, #ccc) center / 1px 100% no-repeat;
}
.sep.gap {
  margin-left: 18px;
}
.sep.wide {
  width: 16px;
}
.caret {
  flex: none;
  width: 16px;
  height: 26px;
  display: grid;
  place-items: center;
}
.caret::after, .select::after {
  content: "";
  border: 4px solid transparent;
  border-top: 5px solid #000;
  border-bottom: 0;
}
.caret.off::after {
  border-top-color: #aaa;
}
.snap {
  margin: 0 8px;
}
.select {
  position: relative;
  flex: none;
  height: 23px;
  border: 1px solid #777;
  border-radius: 3px;
  background: linear-gradient(#f2f2f2, #e8e8e8 50%, #d6d6d6 51%, #dedede);
}
.select::after {
  position: absolute;
  top: 8px;
  right: 4px;
  border-width: 5px 4px 0;
  pointer-events: none;
}
.select select {
  appearance: none;
  width: 100%;
  height: 100%;
  padding-left: 3px;
  outline: 0;
}
.select.plain {
  background: #fff;
  border: 1px solid #e2e2e2;
  border-radius: 0;
}
.zoom {
  width: 94px;
  margin-left: 3px;
}
.view {
  width: 127px;
}
.field-icon {
  width: 20px;
  padding-left: 2px;
}
.field-icon svg {
  width: 14px;
  height: 14px;
}
.spin {
  flex: none;
  display: flex;
  width: 82px;
  height: 24px;
  padding: 1px;
  border: 1px solid #ddd;
  background: #fff;
}
.standard .spin, .property .spin {
  width: 83px;
}
.toolbar .spin input {
  padding: 0 0 3px 2px;
}
.spin input {
  flex: 1;
  min-width: 0;
  outline: 0;
}
.arrows {
  display: flex;
  flex-direction: column;
  width: 19px;
}
.arrows button {
  flex: 1;
  display: grid;
  place-items: center;
  border: 1px solid #b8bac6;
  background: #efeff3;
}
.arrows button::after, .mini button::after {
  content: "";
  border: 3px solid transparent;
  border-bottom: 4px solid #6c74b0;
  border-top: 0;
}
.arrows button + button {
  border-top: 0;
}
.arrows button + button::after, .mini button:first-child::after {
  border-top: 4px solid #6c74b0;
  border-bottom: 0;
}
.calendar {
  width: 18px;
  height: 18px;
  margin: 0 6px 0 5px;
  border: 1px solid #222;
  border-top-style: dashed;
  font: bold 11px/14px "Liberation Sans", sans-serif;
  color: #0a14c8;
  background: #fff;
}
.paper {
  width: 177px;
}
.pair {
  display: grid;
  grid-template-columns: 18px 83px 24px;
  align-items: center;
  margin-left: 6px;
}
.pair svg {
  width: 14px;
  height: 14px;
}
.pair input {
  width: 100%;
  height: 18px;
  padding-left: 4px;
  background: #fff;
  outline: 0;
}
.pair .mini {
  display: flex;
  gap: 1px;
  height: 18px;
  padding: 1px;
  background: #fff;
}
.mini button {
  flex: 1;
  display: grid;
  place-items: center;
  border: 1px solid #b8bac6;
  background: #efeff3;
}
.units {
  margin: 0 4px;
}
.unit {
  width: 101px;
}
.nudge svg {
  width: 16px;
  height: 16px;
  margin: 0 2px;
}
.floating {
  display: flex;
  align-self: flex-start;
  margin-left: auto;
  margin-right: 168px;
  padding: 3px 0;
  border-bottom: 1px solid #ccc;
}
.floating .tool {
  width: 30px;
}

/* toolbox */
.main {
  flex: 1;
  min-height: 0;
  display: grid;
  grid-template-columns: 34px minmax(0, 1fr) 238px 23px;
}
.toolbox {
  padding-top: 8px;
  border-right: 1px solid #c4c4c4;
  background: linear-gradient(90deg, #fff, #efefef 30%);
}
.toolbox button {
  position: relative;
  width: 33px;
  height: 29px;
  display: grid;
  place-items: center;
}
.toolbox svg {
  width: 18px;
  height: 18px;
}
.toolbox .on {
  width: 27px;
  height: 27px;
  margin: 1px 3px;
  border: 1px solid #777;
  border-radius: 3px;
  background: #dcdcdc;
  box-shadow: inset 0 1px 2px #888;
}
.toolbox .more::after {
  content: "";
  position: absolute;
  right: 5px;
  bottom: 4px;
  border-bottom: 6px solid #000;
  border-left: 6px solid transparent;
}
.toolbox .letter {
  font: bold 20px/29px "Liberation Sans", sans-serif;
  color: #fff;
  -webkit-text-stroke: 1px #77788f;
}
.toolbox hr {
  margin: 1px 6px 6px 4px;
  border: 0;
  border-top: 1px solid #bbb;
}

/* drawing area */
.work {
  display: grid;
  grid-template-columns: 22px minmax(0, 1fr) 19px;
  grid-template-rows: 24px minmax(0, 1fr) 19px;
}
.ruler-corner {
  padding: 9px 0 0 6px;
}
.ruler-h {
  grid-column: 2 / 4;
  width: 100%;
  height: 24px;
}
.ruler-v {
  grid-row: 2 / 4;
  width: 22px;
  height: 100%;
}
.work text {
  font-size: 10px;
  text-anchor: middle;
  fill: #222;
}
.work line {
  stroke: #222;
}
.canvas {
  position: relative;
  overflow: hidden;
  background: #fff;
  border-top: 1px solid #999;
  border-left: 1px solid #999;
}
.page {
  position: absolute;
  left: 411px;
  top: 65px;
  width: 398px;
  height: 562px;
  background: #fff;
  border: 1px solid #999;
  box-shadow: 6px 5px 0 #c0c0c0;
}
.scroll-v {
  display: flex;
  flex-direction: column;
  align-items: center;
  padding-right: 2px;
  background: #ececec;
}
.thumb {
  display: grid;
  place-items: center;
  border: 1px solid #999;
  border-radius: 2px;
}
.scroll-v .thumb {
  width: 16px;
  height: 373px;
  margin: auto 0 144px;
  background: linear-gradient(90deg, #f5f5f5, #e2e2e2 50%, #c4c4c4);
}
.scroll-v .thumb span {
  width: 7px;
  height: 9px;
  background: repeating-linear-gradient(#555 0 1px, transparent 1px 3px);
}
.up, .down, .left, .right {
  flex: none;
  width: 17px;
  height: 20px;
  display: grid;
  place-items: center;
}
.up::after, .down::after, .left::after, .right::after {
  content: "";
  border: 4px solid transparent;
}
.up::after {
  border-bottom-color: #444;
  border-top: 0;
}
.down::after {
  border-top-color: #444;
  border-bottom: 0;
}
.left::after {
  border-right-color: #333;
  border-left: 0;
}
.right::after {
  border-left-color: #333;
  border-right: 0;
}
.bottom {
  grid-column: 2 / 4;
  display: flex;
}
.pager {
  flex: 0 1 641px;
  display: flex;
  align-items: center;
  padding-left: 3px;
  border-top: 1px solid #999;
  border-right: 1px solid #999;
}
.pager button {
  margin-right: 9px;
}
.pager output {
  margin: 0 26px 0 15px;
  font-size: 14px;
  line-height: 18px;
}
.pager .page-tab {
  height: 18px;
  width: 79px;
  padding-right: 4px;
  margin-left: -4px;
  font-size: 14px;
  line-height: 18px;
  background: linear-gradient(#c9f1fc, #a4e4f8 50%, #6fcdec 51%);
  clip-path: polygon(0 0, 90% 0, 100% 50%, 100% 100%, 0 100%);
}
.grip {
  width: 2px;
  height: 14px;
  margin-left: auto;
  margin-right: 3px;
  background: repeating-linear-gradient(#999 0 2px, transparent 2px 5px);
}
.scroll-h {
  flex: 1;
  display: flex;
  align-items: center;
}
.scroll-h .thumb {
  flex: 1;
  height: 17px;
  margin: 0 4px;
  background: linear-gradient(#f2f2f2, #dcdcde 50%, #c2c2c4);
}
.scroll-h .thumb span {
  width: 9px;
  height: 7px;
  background: repeating-linear-gradient(90deg, #555 0 1px, transparent 1px 3px);
}
.navigator {
  width: 18px;
  margin-right: 2px;
  background: #ddd;
}

/* docker */
.docker {
  display: flex;
  flex-direction: column;
}
.docker-head {
  height: 26px;
  display: flex;
  align-items: center;
  gap: 3px;
  padding: 0 2px 0 9px;
  background: linear-gradient(#d5f4ff, #c5efff 45%, #8bd9f5 60%, #b5ecfd);
}
.docker-head h2 {
  font-size: 13px;
}
.chevrons {
  margin-left: auto;
  margin-right: 5px;
  font-size: 16px;
}
.docker-head button {
  width: 20px;
  height: 20px;
  display: grid;
  place-items: center;
  border: 1px solid #66829a;
  border-radius: 3px;
  background: #a6cbe2;
}
.docker-head .shut {
  border-color: #8a3a38;
  background: #d9625a;
}
.docker-body {
  flex: 1;
  min-height: 0;
  display: grid;
  grid-template-columns: minmax(0, 1fr) 27px;
}
.panel {
  display: flex;
  flex-direction: column;
  padding: 5px 4px 0 4px;
  border-left: 1px solid #ccc;
}
.layer-bar {
  display: flex;
  gap: 2px;
  height: 30px;
}
.layer-bar button, .panel-foot button {
  width: 25px;
  height: 25px;
  display: grid;
  place-items: center;
  border: 1px solid #888;
  border-radius: 3px;
  background: #e8e8ee;
}
.layer-bar .on {
  border-color: #2f7f9c;
  background: #86d0ea;
}
.layer-bar p {
  margin: -1px 0 0 7px;
  line-height: 14px;
}
.layer-bar .flyout {
  width: 18px;
  height: 20px;
  margin-left: auto;
}
.flyout::after, .play::after {
  content: "";
  border: 4px solid transparent;
  border-left: 5px solid #000;
  border-right: 0;
}
.tree {
  flex: 1;
  list-style: none;
  border: 1px solid #888;
  background: #fff;
}
.tree li {
  height: 20px;
  display: flex;
  align-items: center;
  gap: 3px;
  padding-left: 47px;
  border-bottom: 1px solid #ccc;
}
.tree li:last-child {
  border: 0;
}
.tree .group {
  gap: 4px;
  padding-left: 7px;
  font-weight: bold;
  color: #000;
  background: #d3e4f0;
}
.group svg {
  margin-left: 3px;
}
.fold {
  width: 11px;
  height: 11px;
  border: 1px solid #4a5d8c;
  background: linear-gradient(#223, #223) center / 5px 1px no-repeat #fff;
}
.tree li:not(.group) svg {
  width: 14px;
  height: 14px;
}
.swatch {
  width: 17px;
  height: 14px;
  margin-left: -2px;
  margin-right: 5px;
}
.blue { background: #00f; }
.black { background: #121014; }
.gray { background: #c6c6c4; }
.tree b {
  color: #f01818;
}
.panel-foot {
  display: flex;
  gap: 2px;
  height: 32px;
  padding-top: 5px;
}
.panel-foot .trash {
  margin-left: auto;
  border: 0;
  background: none;
}
.tabs {
  display: flex;
  flex-direction: column;
  padding: 5px 3px 0 0;
  border-left: 1px solid #ddd;
}
.tabs button {
  writing-mode: vertical-rl;
  display: flex;
  align-items: center;
  gap: 5px;
  width: 23px;
  height: 150px;
  padding-top: 6px;
  border: 1px solid #c4c4c4;
  border-left: 0;
  border-radius: 0 5px 5px 0;
  margin-bottom: -1px;
  color: #777;
}
.tabs svg {
  flex: none;
}
.tabs .active {
  height: 142px;
  padding-top: 4px;
  color: #222;
  background: #fafafa;
}
.tabs .x {
  margin-top: 3px;
}
.tabs .contour { height: 75px; padding-top: 4px; }
.tabs .color { height: 61px; }
.tabs .macro { height: 117px; padding-top: 4px; }
.tabs .transform { height: 116px; padding-top: 4px; }

/* colour palette */
.palette {
  display: flex;
  flex-direction: column;
  align-items: center;
  padding-left: 1px;
  border-left: 1px solid #ccc;
}
.dots {
  width: 12px;
  height: 2px;
  margin: 6px 0 4px;
  background: repeating-linear-gradient(90deg, #bbb 0 2px, transparent 2px 5px);
}
.play {
  width: 15px;
  height: 15px;
  display: grid;
  place-items: center;
  border: 1px solid #aaa;
  border-radius: 50%;
  background: #fff;
}
.dropper {
  width: 16px;
  height: 16px;
  margin: 4px 0;
}
.palette .up {
  height: 17px;
}
.palette .up::after {
  border-bottom-color: #999;
}
.none {
  width: 18px;
  height: 18px;
  border: 1px solid #444;
  background: #fff;
}
.swatches {
  flex: 1;
  width: 100%;
  display: flex;
  flex-direction: column;
  padding: 1px 2px 0 0;
}
.swatches button {
  flex: 1;
  border: 1px solid rgba(60, 60, 60, 0.7);
  border-bottom: 0;
}
.start {
  height: 21px;
}

/* status bar */
.status {
  height: 46px;
  display: flex;
  justify-content: space-between;
  padding: 5px 189px 0 5px;
  background: linear-gradient(#fff, #efefef 12px);
}
.status output {
  align-self: flex-end;
  margin-bottom: 2px;
}
.paint {
  display: grid;
  grid-template-columns: 18px 20px;
  grid-template-rows: 20px 17px;
  gap: 4px 6px;
}
.stroke-color {
  background: #000;
}

/* insert page dialog */
.overlay {
  position: absolute;
  inset: 6px 0 0;
  display: grid;
  place-items: center;
}
.dialog {
  width: 376px;
  padding: 0 7px 7px;
  border: 1px solid #1c1c1c;
  border-radius: 7px;
  background: linear-gradient(#8a8a8a, #e4e4e4 31%, #333 31%, #2a2a2a 60%, #6c6c6c);
  box-shadow: inset 0 0 0 1px #aaa, 0 2px 14px 2px rgba(0, 0, 0, 0.65);
}
.dialog header {
  height: 32px;
  display: flex;
  align-items: center;
  margin: 0 -6px;
  padding-left: 7px;
  padding-bottom: 1px;
  border-top: 1px solid #ccc;
  border-radius: 6px 6px 0 0;
  background: linear-gradient(100deg, #8e8e8e, #888 20%, #454545 45%, #555 60%, #8a8a8a 85%);
}
.dialog header h2 {
  font-size: 13px;
  text-shadow: 0 0 6px #ddd, 0 0 6px #ccc;
}
.dialog header button {
  align-self: flex-start;
  width: 52px;
  height: 21px;
  display: grid;
  place-items: center;
  margin-left: auto;
  margin-right: 5px;
  border: 1px solid #eab0a8;
  border-top: 0;
  border-radius: 0 0 4px 4px;
  background: linear-gradient(#e29a8e, #d2402c 50%, #b81f10 51%, #e0604a);
}
.dialog-body {
  padding: 12px 19px 15px 17px;
  border: 1px solid #444;
  box-shadow: 0 0 0 1px #bbb;
  background: #f0f0f0;
}
.dialog h3 {
  display: flex;
  align-items: center;
  gap: 6px;
  height: 18px;
  margin-bottom: 2px;
  font-size: 12px;
  font-weight: bold;
  color: #000;
}
.dialog h3::after {
  content: "";
  flex: 1;
  border-top: 1px solid #ccc;
}
.dialog h3.second {
  margin-top: 13px;
}
.row {
  display: flex;
  align-items: center;
  gap: 9px;
  height: 25px;
  margin-bottom: 9px;
}
.row > label, .caption {
  flex: none;
  width: 124px;
  text-align: right;
}
.row .spin {
  height: 25px;
  border-color: #bbb;
}
.row .spin input {
  padding: 0 0 3px 4px;
}
.row .short {
  width: 62px;
}
.row .select {
  width: 99px;
}
.row.size {
  margin-bottom: 8px;
}
.row.size .select {
  flex: 1;
}
.row.place {
  height: 41px;
  margin-top: 12px;
  align-items: flex-start;
}
.caption, .radios label {
  line-height: 21px;
}
.radios label {
  display: flex;
  align-items: center;
  gap: 4px;
}
.radios input {
  appearance: none;
  width: 13px;
  height: 13px;
  border: 1px solid #888;
  border-radius: 50%;
  background: #eee;
}
.radios .hot {
  border-color: #4a90a8;
  background: radial-gradient(circle at 70% 70%, #d8f8ff, #7fd3ea);
}
.radios input:checked {
  background: radial-gradient(circle, #5fd0e8 0 1px, #0c4a66 3px 4px, #e8e8e8 5px);
}
.pressed .arrows button + button {
  border: 1px solid #3c8fb0;
  border-top: 2px solid #000;
  background: #c4ecfa;
}
.row .tool {
  width: 18px;
  margin: 0;
}
.row .tool.on {
  width: 24px;
  margin: 0 0 0 1px;
}
.actions {
  display: flex;
  justify-content: flex-end;
  gap: 10px;
  margin-top: 17px;
}
.actions button {
  width: 81px;
  height: 24px;
  border: 1px solid #888;
  border-radius: 3px;
  background: linear-gradient(#f4f4f4, #eaeaea 50%, #dcdcdc 51%, #d6d6d6);
}
.actions .default {
  border: 2px solid #1fa5c8;
}
```
FILE: main.js
```js
// 50 mm on screen at 45% zoom
const STEP = 94.6;

function make(name, attrs, text) {
  const el = document.createElementNS('http://www.w3.org/2000/svg', name);
  for (const key in attrs) el.setAttribute(key, attrs[key]);
  if (text !== undefined) el.textContent = text;
  return el;
}

function drawHorizontal() {
  const ruler = document.getElementById('ruler-h');
  const zero = 412;
  const end = ruler.clientWidth;
  for (let i = -43; i < 92; i++) {
    const x = Math.round(zero + i * STEP / 10) + 0.5;
    if (x < 4 || x > end - 4) continue;
    const size = i % 10 === 0 ? 8 : i % 5 === 0 ? 4 : 2;
    ruler.append(make('line', { x1: x, x2: x, y1: 22 - size, y2: 22 }));
    if (i % 10 === 0 && x < end - 60) {
      ruler.append(make('text', { x, y: 13 }, Math.abs(i * 5)));
    }
  }
  ruler.append(make('text', { x: end - 30, y: 13 }, 'millimeters'));
  ruler.append(make('line', { x1: 812.5, x2: 812.5, y1: 8, y2: 24, 'stroke-dasharray': '3 2' }));
}

function drawVertical() {
  const ruler = document.getElementById('ruler-v');
  const zero = 627;
  const end = ruler.clientHeight;
  for (let i = -10; i < 67; i++) {
    const y = Math.round(zero - i * STEP / 10) + 0.5;
    if (y < 2 || y > end - 2) continue;
    const size = i % 10 === 0 ? 5 : i % 5 === 0 ? 3 : 2;
    ruler.append(make('line', { x1: 20 - size, x2: 20, y1: y, y2: y }));
    if (i % 10 === 0 && i >= 0) {
      ruler.append(make('text', { transform: `translate(15 ${y}) rotate(-90)` }, i * 5));
    }
  }
  ruler.append(make('text', { transform: `translate(15 ${end - 28}) rotate(-90)` }, 'millimeters'));
  ruler.append(make('line', { x1: 3, x2: 20, y1: 185.5, y2: 185.5, 'stroke-dasharray': '3 3' }));
}

const colors = [
  '#121014', '#3a3a3b', '#58595b', '#6d6e70', '#808184', '#949597', '#a9aaab',
  '#c0c1c2', '#d8d9da', '#ededed', '#ffffff', '#001b87', '#009fe6', '#008f2a',
  '#ffee00', '#ff0010', '#ff0084', '#c43f80', '#ff8400', '#ffb0b4', '#887068',
  '#d8cfe8', '#a99ccb', '#5f90c8', '#7b67ad', '#8f83ae', '#3e6096', '#5c4f6e',
  '#65809f', '#008ad3', '#72d6f0', '#accad5', '#8ea6ad'
];

function drawSwatches() {
  const box = document.getElementById('swatches');
  for (const color of colors) {
    const button = document.createElement('button');
    button.style.background = color;
    button.setAttribute('aria-label', color);
    box.append(button);
  }
}

drawHorizontal();
drawVertical();
drawSwatches();
```
